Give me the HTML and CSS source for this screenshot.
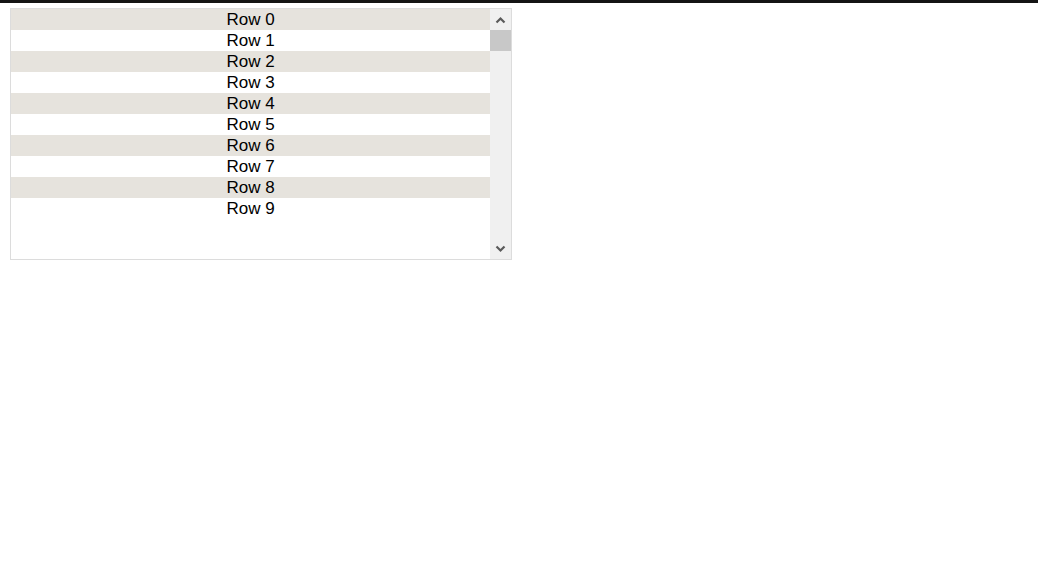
FILE: index.html
```html
<!DOCTYPE html>
<html>
<head>
<meta charset="utf-8">
<link rel="stylesheet" href="styles.css">
</head>
<body>
<div class="topbar"></div>
<div class="listbox">
  <div class="rows">
    <div class="row alt">Row 0</div>
    <div class="row">Row 1</div>
    <div class="row alt">Row 2</div>
    <div class="row">Row 3</div>
    <div class="row alt">Row 4</div>
    <div class="row">Row 5</div>
    <div class="row alt">Row 6</div>
    <div class="row">Row 7</div>
    <div class="row alt">Row 8</div>
    <div class="row">Row 9</div>
  </div>
  <div class="scrollbar">
    <div class="arrow">
      <svg width="11" height="8" viewBox="0 0 11 8"><path d="M1.5 6.5 L5.5 2.5 L9.5 6.5" fill="none" stroke="#5a5a5a" stroke-width="2.2"/></svg>
    </div>
    <div class="thumb"></div>
    <div class="track"></div>
    <div class="arrow">
      <svg width="11" height="8" viewBox="0 0 11 8"><path d="M1.5 1.5 L5.5 5.5 L9.5 1.5" fill="none" stroke="#5a5a5a" stroke-width="2.2"/></svg>
    </div>
  </div>
</div>
</body>
</html>
```
FILE: styles.css
```css
html, body {
  margin: 0;
  padding: 0;
  background: #fff;
}
body {
  font-family: "Liberation Sans", Arial, sans-serif;
}
.topbar {
  height: 3px;
  background: #141414;
}
.listbox {
  margin: 5px 0 0 10px;
  width: 500px;
  height: 250px;
  border: 1px solid #dcdcdc;
  display: flex;
}
.rows {
  width: 479px;
}
.row {
  height: 21px;
  line-height: 22px;
  font-size: 17px;
  color: #000;
  text-align: center;
}
.row.alt {
  background: #e6e3dd;
}
.scrollbar {
  width: 21px;
  background: #f0f0f0;
  display: flex;
  flex-direction: column;
}
.arrow {
  height: 21px;
  display: flex;
  align-items: center;
  justify-content: center;
}
.thumb {
  height: 21px;
  background: #c8c8c8;
}
.track {
  flex: 1;
}
```
